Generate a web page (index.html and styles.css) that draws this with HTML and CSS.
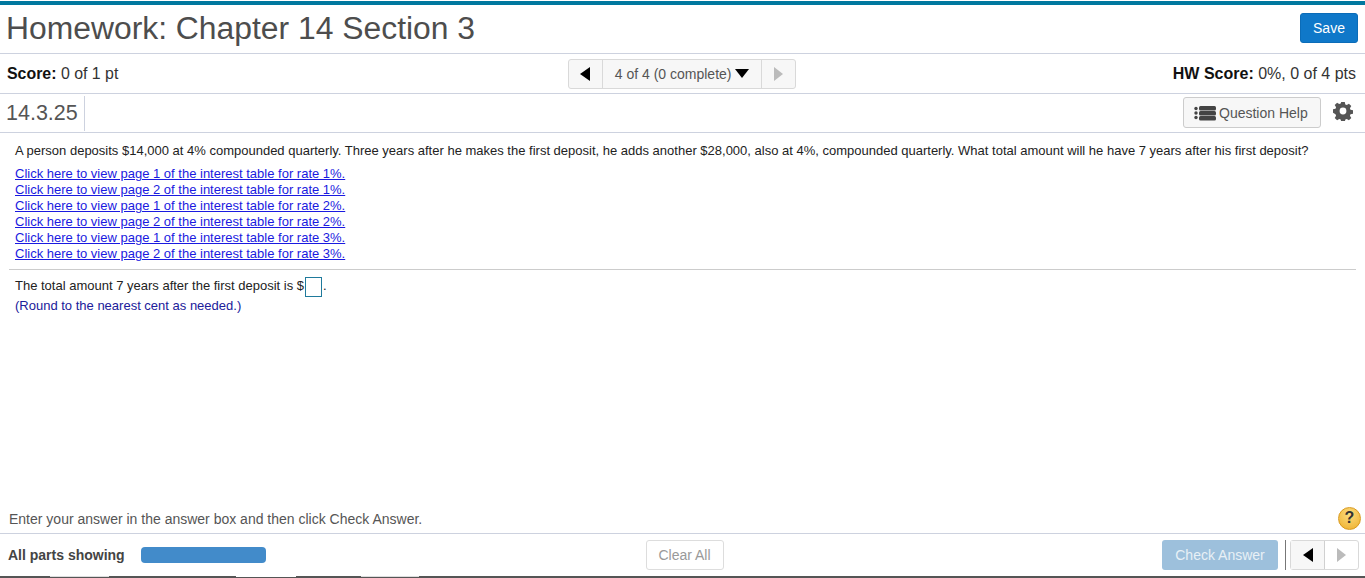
FILE: index.html
```html
<!DOCTYPE html>
<html lang="en">
<head>
<meta charset="utf-8">
<title>Homework: Chapter 14 Section 3</title>
<link rel="stylesheet" href="styles.css">
</head>
<body>
<div class="page">
  <header class="title-bar">
    <h1 class="title">Homework: Chapter 14 Section 3</h1>
    <button class="save">Save</button>
  </header>
  <div class="score-bar">
    <div class="score"><b>Score:</b> 0 of 1 pt</div>
    <div class="pager">
      <span class="pager-btn pager-prev"><svg width="10" height="14" viewBox="0 0 10 14"><path d="M10 0V14L0 7Z" fill="#000"/></svg></span>
      <span class="pager-mid">4 of 4 (0 complete)<svg width="14" height="9" viewBox="0 0 14 9"><path d="M0 0H14L7 9Z" fill="#000"/></svg></span>
      <span class="pager-btn pager-next"><svg width="9" height="14" viewBox="0 0 9 14"><path d="M0 0V14L9 7Z" fill="#bbb"/></svg></span>
    </div>
    <div class="hw-score"><b>HW Score:</b> 0%, 0 of 4 pts</div>
  </div>
  <div class="question-bar">
    <div class="qnum">14.3.25</div>
    <div class="question-tools">
      <button class="help"><svg width="22" height="16" viewBox="0 0 22 16"><g fill="#444"><circle cx="2" cy="3.500" r="1.700"/><circle cx="2" cy="8" r="1.700"/><circle cx="2" cy="12.500" r="1.700"/><rect x="5" y="1" width="17" height="4.500" rx="1.500"/><rect x="5" y="6" width="17" height="4.500" rx="1.500"/><rect x="5" y="11" width="17" height="4.500" rx="1.500"/></g></svg>Question Help</button>
      <svg class="gear" width="20" height="20" viewBox="0 0 20 20"><path fill="#555" fill-rule="evenodd" d="M8.200 1h3.600l.5 2.500 1.500.6 2.100-1.400 2.400 2.400-1.400 2.100.6 1.500 2.500.5v3.600l-2.500.5-.6 1.500 1.400 2.100-2.400 2.400-2.100-1.400-1.500.6-.5 2.500H8.200l-.5-2.500-1.500-.6-2.100 1.400-2.400-2.400 1.400-2.100-.6-1.500L0 11.800V8.200l2.500-.5.6-1.500-1.400-2.100 2.400-2.400 2.100 1.400 1.500-.6zM10 6.600a3.400 3.400 0 1 0 0 6.800 3.400 3.400 0 0 0 0-6.800z"/></svg>
    </div>
  </div>
  <main class="content">
    <p class="question">A person deposits $14,000 at 4% compounded quarterly. Three years after he makes the first deposit, he adds another $28,000, also at 4%, compounded quarterly. What total amount will he have 7 years after his first deposit?</p>
    <ul class="links">
      <li><a href="#">Click here to view page 1 of the interest table for rate 1%.</a></li>
      <li><a href="#">Click here to view page 2 of the interest table for rate 1%.</a></li>
      <li><a href="#">Click here to view page 1 of the interest table for rate 2%.</a></li>
      <li><a href="#">Click here to view page 2 of the interest table for rate 2%.</a></li>
      <li><a href="#">Click here to view page 1 of the interest table for rate 3%.</a></li>
      <li><a href="#">Click here to view page 2 of the interest table for rate 3%.</a></li>
    </ul>
    <div class="answer">
      <div class="answer-line">The total amount 7 years after the first deposit is $<span class="answer-box"></span>.</div>
      <div class="hint">(Round to the nearest cent as needed.)</div>
    </div>
  </main>
  <div class="instruction">
    <span class="instruction-text">Enter your answer in the answer box and then click Check Answer.</span>
    <span class="qmark">?</span>
  </div>
  <footer class="footer">
    <div class="parts"><b>All parts showing</b><span class="progress"></span></div>
    <button class="clear">Clear All</button>
    <div class="actions">
      <button class="check">Check Answer</button>
      <span class="divider"></span>
      <div class="pager pager-small">
        <span class="pager-btn small-prev"><svg width="10" height="14" viewBox="0 0 10 14"><path d="M10 0V14L0 7Z" fill="#000"/></svg></span>
        <span class="pager-btn small-next"><svg width="9" height="14" viewBox="0 0 9 14"><path d="M0 0V14L9 7Z" fill="#bbb"/></svg></span>
      </div>
    </div>
  </footer>
  <div class="taskbar"><span class="tab tab-a"></span><span class="tab tab-b"></span><span class="tab tab-c"></span></div>
</div>
</body>
</html>
```
FILE: styles.css
```css
* { box-sizing: border-box; }
html, body { margin: 0; padding: 0; }
body { font-family: "Liberation Sans", Arial, sans-serif; color: #000; background: #fff; }
button { font-family: inherit; cursor: pointer; }
.page { width: 1365px; height: 578px; display: flex; flex-direction: column; overflow: hidden; }

.title-bar { margin-top: 1px; height: 53px; border-top: 4px solid #00789f; border-bottom: 1px solid #cdd2df; display: flex; align-items: center; justify-content: space-between; padding: 0 7px 2px 6px; }
.title { margin: 0; font-size: 31.85px; font-weight: 400; color: #4d4d4d; line-height: 40px; }
.save { width: 58px; height: 30px; background: #0f78c9; color: #fff; border: 1px solid #0b6cb8; border-radius: 3px; font-size: 14px; padding: 0; }

.score-bar { height: 40px; border-bottom: 1px solid #cdd2df; display: grid; grid-template-columns: 1fr auto 1fr; align-items: center; padding: 0 9px 0 7px; font-size: 15.9px; color: #333; }
.score-bar b { color: #111; }
.hw-score { text-align: right; font-size: 16px; }

.pager { display: flex; height: 30px; border: 1px solid #d9d9d9; border-radius: 3px; background: #f7f7f7; }
.pager-btn { display: flex; align-items: center; justify-content: center; }
.pager-prev { width: 34px; border-right: 1px solid #d9d9d9; }
.pager-next { width: 34px; border-left: 1px solid #d9d9d9; }
.pager-mid { width: 158px; display: flex; align-items: center; justify-content: flex-end; gap: 3px; padding-right: 12px; font-size: 14px; color: #555; }

.question-bar { height: 39px; border-bottom: 1px solid #cdd2df; display: flex; justify-content: space-between; padding: 2px 12px 0 6px; }
.qnum { width: 79px; height: 35px; border-right: 1px solid #cdd2df; font-size: 21.5px; line-height: 35px; color: #555; }
.question-tools { display: flex; align-items: flex-start; gap: 12px; height: 34px; }
.help { height: 31px; width: 138px; display: flex; align-items: center; gap: 3px; margin-top: 1px; padding: 0 0 0 10px; border: 1px solid #ccc; border-radius: 3px; background: #f7f7f7; font-size: 14px; color: #555; }
.gear { margin-top: 5px; }

.content { flex: 1; padding: 0 9px; font-size: 13px; min-height: 0; }
.question { margin: 0; padding: 10px 6px 0; line-height: 16px; color: #222; }
.links { list-style: none; margin: 0; padding: 7px 6px 7px; line-height: 16px; border-bottom: 1px solid #ccc; }
.links a { color: #1a1ae0; text-decoration: underline; }
.answer { padding: 7px 6px 0; color: #222; }
.answer-line { display: flex; align-items: flex-start; height: 20px; line-height: 18px; }
.answer-box { width: 17px; height: 20px; margin-left: 1px; margin-right: 1px; border: 1px solid #1f7a9c; background: #fff; }
.hint { color: #20209a; line-height: 16px; margin-top: 1px; }

.instruction { height: 31px; flex: none; display: flex; justify-content: space-between; align-items: center; padding: 0 4px 0 9px; font-size: 14px; color: #555; border-bottom: 1px solid #cdd2df; }
.instruction-text { margin-top: 2px; }
.qmark { width: 23px; height: 23px; border-radius: 50%; background: radial-gradient(circle at 50% 30%, #fbdc7e, #eeae2a); border: 1px solid #d99a1e; font-weight: 700; font-size: 16px; color: #333; display: flex; align-items: center; justify-content: center; }

.footer { height: 42px; flex: none; display: grid; grid-template-columns: 1fr auto 1fr; align-items: center; padding: 0 6px 0 8px; }
.parts { display: flex; align-items: center; gap: 16px; font-size: 14px; color: #444; }
.progress { width: 125px; height: 16px; background: #428bca; border-radius: 4px; }
.clear { width: 78px; height: 30px; margin-left: 2px; border: 1px solid #ddd; border-radius: 3px; background: #fff; color: #999; font-size: 14px; padding: 0; }
.actions { display: flex; align-items: center; justify-content: flex-end; }
.check { width: 116px; height: 30px; border: 0; border-radius: 3px; background: #9dc0dc; color: #e8f0f6; font-size: 14px; padding: 0; }
.divider { width: 1px; height: 30px; background: #777; margin: 0 4px 0 7px; }
.pager-small { background: transparent; }
.small-prev { width: 34px; background: #f7f7f7; border-right: 1px solid #d0d0d0; }
.small-next { width: 33px; }

.taskbar { height: 2px; flex: none; background: #555; display: flex; }
.tab { height: 1px; background: #ddd; }
.tab-a { width: 59px; margin-left: 50px; }
.tab-b { width: 60px; margin-left: 127px; background: #fff; }
.tab-c { width: 58px; margin-left: 65px; }
```
